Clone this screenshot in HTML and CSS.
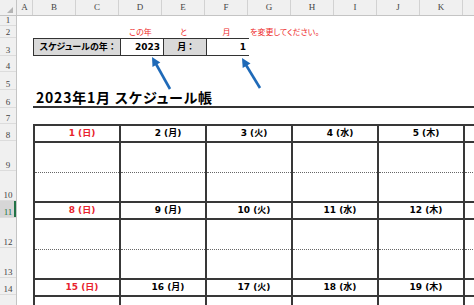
FILE: index.html
```html
<!DOCTYPE html>
<html lang="ja">
<head>
    <meta charset="UTF-8">
    <title>スケジュール帳</title>
    <link rel="stylesheet" href="styles.css">
</head>
<body>
    <div class="sheet">
        <!-- Column letters -->
        <div class="colhead">
            <div class="corner"><i></i></div>
            <span class="col-a">A</span>
            <span>B</span><span>C</span><span>D</span><span>E</span><span>F</span>
            <span>G</span><span>H</span><span>I</span><span>J</span><span>K</span><span>L</span>
        </div>

        <div class="main">
            <!-- Row numbers -->
            <div class="rowhead">
                <div class="h10">1</div>
                <div class="h12">2</div>
                <div class="h18">3</div>
                <div class="h16">4</div>
                <div class="h18">5</div>
                <div class="h18">6</div>
                <div class="h16">7</div>
                <div class="h17">8</div>
                <div class="h30">9</div>
                <div class="h30">10</div>
                <div class="h17 active">11</div>
                <div class="h30">12</div>
                <div class="h30">13</div>
                <div class="h17">14</div>
                <div class="h30">15</div>
            </div>

            <div class="content">
                <div class="h10"></div>

                <div class="notes h12">
                    <span></span>
                    <span class="center">この年</span>
                    <span class="center">と</span>
                    <span class="center">月</span>
                    <span>を変更してください。</span>
                </div>

                <div class="inputs">
                    <div class="label wide">スケジュールの年 ：</div>
                    <div class="value">2023</div>
                    <div class="label">月 ：</div>
                    <div class="value">1</div>
                </div>

                <div class="h34"></div>
                <div class="title">2023年1月 スケジュール帳</div>
                <div class="h16"></div>

                <table class="calendar">
                    <tr class="days">
                        <th class="sun">1 (日)</th><th>2 (月)</th><th>3 (火)</th><th>4 (水)</th><th>5 (木)</th><th>6 (金)</th>
                    </tr>
                    <tr class="top"><td></td><td></td><td></td><td></td><td></td><td></td></tr>
                    <tr class="bottom"><td></td><td></td><td></td><td></td><td></td><td></td></tr>
                    <tr class="days">
                        <th class="sun">8 (日)</th><th>9 (月)</th><th>10 (火)</th><th>11 (水)</th><th>12 (木)</th><th>13 (金)</th>
                    </tr>
                    <tr class="top"><td></td><td></td><td></td><td></td><td></td><td></td></tr>
                    <tr class="bottom"><td></td><td></td><td></td><td></td><td></td><td></td></tr>
                    <tr class="days">
                        <th class="sun">15 (日)</th><th>16 (月)</th><th>17 (火)</th><th>18 (水)</th><th>19 (木)</th><th>20 (金)</th>
                    </tr>
                    <tr class="top"><td></td><td></td><td></td><td></td><td></td><td></td></tr>
                </table>
            </div>
        </div>

        <!-- Arrows pointing at the input cells -->
        <svg class="arrows" width="474" height="305" viewBox="0 0 474 305">
            <line x1="170" y1="89" x2="156" y2="64" />
            <polygon points="152,57 160.3,62.6 152.5,67" />
            <line x1="260" y1="88" x2="246" y2="65" />
            <polygon points="242,58 250.5,63.4 242.7,68" />
        </svg>
    </div>
</body>
</html>
```

FILE: styles.css
```css
/* Page base */
body {
    margin: 0;
    background: #ffffff;
    font-family: "DejaVu Sans", "Noto Sans CJK JP", sans-serif;
    font-feature-settings: "palt";
    color: #000;
}

.sheet {
    position: relative;
    width: 474px;
    height: 305px;
    overflow: hidden;
}

/* Column header bar */
.colhead {
    display: flex;
    height: 16px;
    box-sizing: border-box;
    background: #f0f0f0;
    border-bottom: 1px solid #c4c4c4;
}

.colhead .corner {
    position: relative;
    flex: none;
    width: 17px;
    box-sizing: border-box;
    border-right: 1px solid #c4c4c4;
}

.colhead .corner i {
    position: absolute;
    right: 3px;
    bottom: 2px;
    border-left: 6px solid transparent;
    border-bottom: 6px solid #b4b4b4;
}

.colhead span {
    flex: none;
    width: 43px;
    box-sizing: border-box;
    border-right: 1px solid #d2d2d2;
    text-align: center;
    font: 9px/15px "Liberation Serif", serif;
    color: #444;
}

.colhead .col-a {
    width: 16px;
}

/* Row numbers + cells */
.main {
    display: flex;
}

.rowhead {
    flex: none;
    width: 17px;
    box-sizing: border-box;
    background: #f0f0f0;
    border-right: 1px solid #c4c4c4;
    display: flex;
    flex-direction: column;
}

.rowhead div {
    flex: none;
    box-sizing: border-box;
    border-bottom: 1px solid #dcdcdc;
    display: flex;
    align-items: flex-end;
    justify-content: center;
    font: 9px/10px "Liberation Serif", serif;
    color: #444;
}

.rowhead .active {
    background: #d6d6d6;
    color: #217346;
    box-shadow: inset -2px 0 0 #217346;
}

.h10 { height: 10px; }
.h12 { height: 12px; }
.h16 { height: 16px; }
.h17 { height: 17px; }
.h18 { height: 18px; }
.h30 { height: 30px; }
.h34 { height: 34px; }

.content {
    flex: none;
    width: 457px;
    padding-left: 16px;
    box-sizing: border-box;
}

/* Red hint line */
.notes {
    display: grid;
    grid-template-columns: 86px 43px 43px 43px 1fr;
    font-family: "Noto Sans CJK JP", sans-serif;
    font-size: 8px;
    line-height: 12px;
    color: #ee2a2a;
    white-space: nowrap;
}

.notes .center {
    text-align: center;
}

.notes span:last-child {
    padding-left: 2px;
}

/* Year / month input cells */
.inputs {
    display: flex;
    width: 216px;
    height: 18px;
    box-sizing: border-box;
    border: 1px solid #333;
    font-weight: bold;
    font-size: 9px;
    line-height: 16px;
}

.inputs div {
    flex: none;
    width: 43px;
    box-sizing: border-box;
    border-left: 1px solid #333;
}

.inputs div:first-child {
    border-left: none;
}

.inputs .label {
    background: #d9d9d9;
    text-align: center;
    font-family: "Noto Sans CJK JP", sans-serif;
}

.inputs .wide {
    width: 86px;
}

.inputs .value {
    background: #fff;
    text-align: right;
    padding-right: 3px;
}

/* Sheet title */
.title {
    height: 18px;
    box-sizing: border-box;
    padding-left: 3px;
    border-bottom: 2px solid #333;
    font-family: "Noto Sans CJK JP", sans-serif;
    font-weight: bold;
    font-size: 14px;
    letter-spacing: 0.8px;
    line-height: 15px;
    white-space: nowrap;
}

/* Calendar grid */
.calendar {
    border-collapse: collapse;
    table-layout: fixed;
    width: 516px;
}

.calendar th,
.calendar td {
    width: 84px;
    padding: 0;
    border: 2px solid #383838;
}

.calendar .days th {
    height: 15px;
    text-indent: 10px;
    font-size: 9px;
    line-height: 13px;
    font-weight: bold;
    text-align: center;
    white-space: nowrap;
}

.calendar .sun {
    color: #e8232d;
}

.calendar .top td {
    height: 29px;
    border-bottom: 1px dotted #666;
}

.calendar .bottom td {
    height: 28px;
    border-top: 1px dotted #666;
}

/* Overlay arrows */
.arrows {
    position: absolute;
    top: 0;
    left: 0;
    pointer-events: none;
}

.arrows line {
    stroke: #1f6ab8;
    stroke-width: 2.6;
}

.arrows polygon {
    fill: #1f6ab8;
}
```
